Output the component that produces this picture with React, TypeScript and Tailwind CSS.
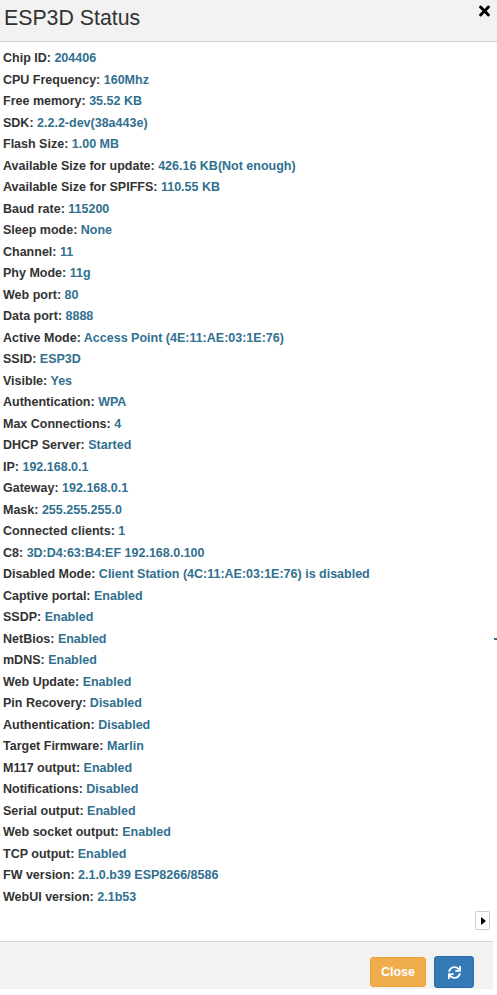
import { FaTimes, FaSync } from "react-icons/fa";

// Status lines as shown in the dialog
const rows: [string, string][] = [
  ["Chip ID", "204406"],
  ["CPU Frequency", "160Mhz"],
  ["Free memory", "35.52 KB"],
  ["SDK", "2.2.2-dev(38a443e)"],
  ["Flash Size", "1.00 MB"],
  ["Available Size for update", "426.16 KB(Not enough)"],
  ["Available Size for SPIFFS", "110.55 KB"],
  ["Baud rate", "115200"],
  ["Sleep mode", "None"],
  ["Channel", "11"],
  ["Phy Mode", "11g"],
  ["Web port", "80"],
  ["Data port", "8888"],
  ["Active Mode", "Access Point (4E:11:AE:03:1E:76)"],
  ["SSID", "ESP3D"],
  ["Visible", "Yes"],
  ["Authentication", "WPA"],
  ["Max Connections", "4"],
  ["DHCP Server", "Started"],
  ["IP", "192.168.0.1"],
  ["Gateway", "192.168.0.1"],
  ["Mask", "255.255.255.0"],
  ["Connected clients", "1"],
  ["C8", "3D:D4:63:B4:EF 192.168.0.100"],
  ["Disabled Mode", "Client Station (4C:11:AE:03:1E:76) is disabled"],
  ["Captive portal", "Enabled"],
  ["SSDP", "Enabled"],
  ["NetBios", "Enabled"],
  ["mDNS", "Enabled"],
  ["Web Update", "Enabled"],
  ["Pin Recovery", "Disabled"],
  ["Authentication", "Disabled"],
  ["Target Firmware", "Marlin"],
  ["M117 output", "Enabled"],
  ["Notifications", "Disabled"],
  ["Serial output", "Enabled"],
  ["Web socket output", "Enabled"],
  ["TCP output", "Enabled"],
  ["FW version", "2.1.0.b39 ESP8266/8586"],
  ["WebUI version", "2.1b53"],
];

export default function App() {
  return (
    <div
      className="relative w-[497px] h-[995px] bg-white overflow-hidden"
      style={{ fontFamily: '"Liberation Sans", Arial, sans-serif' }}
    >
      {/* Header */}
      <div className="flex justify-between h-[42px] bg-[#f2f2f2] border-b border-[#d3d3d3]">
        <h4 className="pl-[4px] pt-[8px] text-[21.3px] leading-none text-[#333]">ESP3D Status</h4>
        <button className="pr-[7px] pt-[3px] self-start text-black">
          <FaTimes className="w-[11px] h-[16px]" />
        </button>
      </div>

      {/* Body */}
      <div className="pl-[3px] pt-[6px] text-[12.5px] leading-[21.5px] font-bold">
        {rows.map(([label, value], i) => (
          <div key={i} className="whitespace-nowrap">
            <span className="text-[#333]">{label}: </span>
            <span className="text-[#31708f]">{value}</span>
          </div>
        ))}
        <div className="flex justify-end pr-[7px] pt-[3px] h-[33px]">
          <button className="flex items-center justify-center w-[15px] h-[19px] border border-[#ccc] rounded-[2px] bg-white">
            <span className="w-0 h-0 border-y-[4px] border-y-transparent border-l-[5px] border-l-black ml-[1px]" />
          </button>
        </div>
      </div>

      {/* Footer */}
      <div className="w-[493px] h-[48px] bg-[#f2f2f2] border-t border-[#d3d3d3] flex items-center justify-end gap-[8px] pt-[13px] pr-[19px]">
        <button className="w-[56px] h-[30px] bg-[#f0ad4e] border border-[#eea236] rounded-[3px] text-white text-[12.5px] font-bold">
          Close
        </button>
        <button className="w-[40px] h-[32px] bg-[#337ab7] border border-[#2e6da4] rounded-[3px] flex items-center justify-center text-white">
          <FaSync className="w-[13px] h-[13px]" />
        </button>
      </div>

      {/* tiny scroll marker on the right edge */}
      <div className="absolute left-[494px] top-[638px] w-[3px] h-[2px] bg-[#31708f]" />
    </div>
  );
}
